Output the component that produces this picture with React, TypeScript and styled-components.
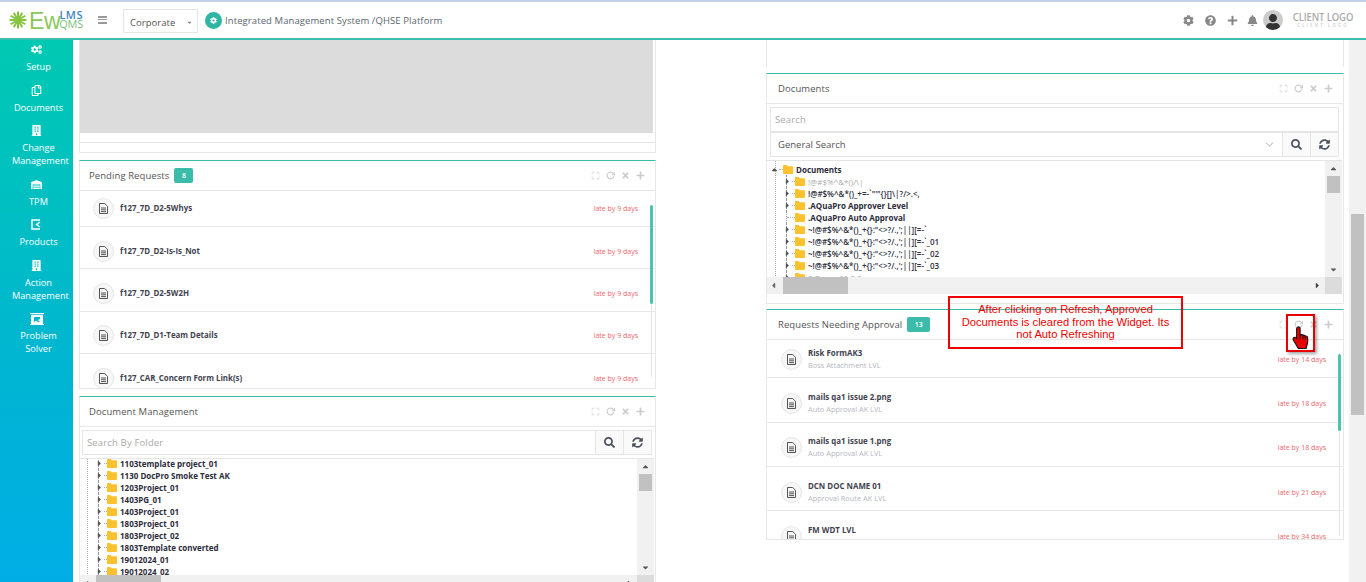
import styled, { createGlobalStyle } from 'styled-components';
import { FaBell, FaBuilding, FaCaretDown, FaCaretLeft, FaCaretRight, FaCaretUp, FaCog, FaCogs, FaPlus, FaQuestionCircle, FaRegCopy, FaSearch, FaSyncAlt, FaTimes, FaUser, FaWarehouse } from 'react-icons/fa';
import { FiChevronDown, FiMaximize, FiRotateCw } from 'react-icons/fi';

const font = `"Open Sans", "Noto Sans", "Liberation Sans", sans-serif`;

const GlobalStyle = createGlobalStyle`
  html, body { margin: 0; height: 100%; overflow: hidden; background: #fff; }
  body { font-family: ${font}; color: #555; }
  * { box-sizing: border-box; }
`;

const Page = styled.div`
  position: relative;
  width: 1366px;
  height: 582px;
  overflow: hidden;
  display: flex;
  flex-direction: column;
`;

const Header = styled.header`
  height: 40px;
  flex: none;
  display: flex;
  align-items: center;
  background: #fff;
  border-top: 2px solid #c3d1e8;
  border-bottom: 2px solid #3bbba9;
  padding: 2px 0 0 9px;
`;

const Logo = styled.div`
  width: 77px;
  height: 28px;
  margin-top: -2px;
  display: flex;
  align-items: center;
  flex: none;
`;

const LogoWord = styled.span`
  font: 400 23px/28px "Liberation Sans", sans-serif;
  color: #8cc75a;
  margin-left: 2px;
  letter-spacing: -0.4px;
  padding-top: 1px;
`;

const LogoStack = styled.div`
  display: flex;
  flex-direction: column;
  align-items: flex-end;
  font: 400 11px/9.5px ${font};
  margin: -2px 0 0 -1px;
`;

const LogoLms = styled.span`
  color: #3f86c2;
  letter-spacing: 0.5px;
  font-weight: 600;
`;

const LogoQms = styled.span`
  color: #7cbf7a;
  letter-spacing: -0.2px;
`;

const Burger = styled.div`
  width: 9px;
  height: 8px;
  margin: -2px 0 0 12px;
  flex: none;
  border-top: 2px solid #999;
  border-bottom: 2px solid #999;
  &::after {
    content: '';
    display: block;
    height: 1px;
    margin-top: 0.5px;
    background: #999;
  }
`;

const Selector = styled.div`
  width: 75px;
  height: 24px;
  margin-left: 16px;
  flex: none;
  border: 1px solid #e5e5e5;
  display: flex;
  align-items: center;
  justify-content: space-between;
  padding: 2px 4px 0 6px;
  font-size: 9.5px;
  letter-spacing: 0.05px;
  color: #555;
  svg { font-size: 7px; color: #888; }
`;

const PlatformMark = styled.span`
  width: 17px;
  height: 17px;
  margin: -1px 3px 0 7px;
  border-radius: 50%;
  background: #2fb5a4;
  color: #fff;
  display: flex;
  align-items: center;
  justify-content: center;
  flex: none;
  font-size: 7px;
`;

const PlatformTitle = styled.span`
  font-size: 9.5px;
  letter-spacing: 0.09px;
  color: #5b6770;
  margin-top: -2px;
`;

const HeaderTools = styled.div`
  margin-left: auto;
  display: flex;
  align-items: center;
  color: #888;
  padding-right: 13px;
  margin-top: -2px;
`;

const HeaderIcon = styled.span<{ $wide?: number }>`
  width: ${({ $wide }) => $wide ?? 22}px;
  display: flex;
  justify-content: center;
  font-size: 11px;
`;

const Avatar = styled.span`
  width: 20px;
  height: 20px;
  margin: 0 10px 0 2px;
  border-radius: 50%;
  overflow: hidden;
  background: #ccc;
  color: #333;
  display: flex;
  align-items: flex-end;
  justify-content: center;
  font-size: 16px;
`;

const ClientLogo = styled.div`
  display: flex;
  flex-direction: column;
  align-items: center;
  width: 60px;
  color: #aaa;
  font-size: 9.5px;
  line-height: 10px;
  font-weight: 600;
  white-space: nowrap;
  letter-spacing: -0.1px;
  transform: scaleY(1.2);
`;

const ClientSub = styled.span`
  font-size: 4px;
  line-height: 4px;
  letter-spacing: 2.3px;
  color: #ccc;
`;

const Body = styled.div`
  flex: 1;
  min-height: 0;
  display: flex;
`;

const Sidebar = styled.nav`
  width: 73px;
  flex: none;
  padding-top: 1px;
  background: linear-gradient(180deg, #00c9b2 0%, #00b5d2 60%, #00aee6 100%);
  color: #fff;
`;

const NavItem = styled.div`
  padding-bottom: 8.5px;
`;

const NavIcon = styled.div`
  height: 17px;
  display: flex;
  align-items: center;
  justify-content: center;
  font-size: 11px;
`;

const NavLabel = styled.div`
  width: 53px;
  margin: 2px 0 0 12px;
  text-align: center;
  font-size: 9.2px;
  line-height: 13px;
`;

const Columns = styled.div`
  flex: 1;
  min-width: 0;
  display: flex;
  padding-left: 6px;
  gap: 110px;
`;

const Column = styled.div<{ $width: number }>`
  width: ${({ $width }) => $width}px;
  flex: none;
  display: flex;
  flex-direction: column;
`;

const Widget = styled.section<{ $height: number; $gap?: number; $tail?: number }>`
  height: ${({ $height }) => $height}px;
  margin-bottom: ${({ $gap }) => $gap ?? 0}px;
  padding-bottom: ${({ $tail }) => $tail ?? 0}px;
  flex: none;
  position: relative;
  display: flex;
  flex-direction: column;
  overflow: hidden;
  background: #fff;
  border: 1px solid #e7e7e7;
  border-top: 1.5px solid #3bbba9;
`;

const ChartStub = styled.div`
  height: 113px;
  flex: none;
  margin-bottom: 7px;
  border: 1px solid #e7e7e7;
  border-top: none;
`;

const ChartInner = styled.div`
  height: 103px;
  padding-right: 2px;
  border-bottom: 1px solid #e7e7e7;
`;

const ChartFill = styled.div`
  height: 93px;
  background: #dcdcdc;
`;

const TopStub = styled.div`
  height: 27px;
  flex: none;
  margin-bottom: 6px;
  border: 1px solid #e7e7e7;
  border-top: none;
  border-bottom: none;
`;

const WidgetHeader = styled.div<{ $inset: number }>`
  height: 30px;
  flex: none;
  display: flex;
  align-items: center;
  padding: 0 10px 0 ${({ $inset }) => $inset}px;
  border-bottom: 1px solid #e7e7e7;
`;

const WidgetTitle = styled.h3`
  margin: 0;
  font-size: 9.5px;
  font-weight: 400;
  letter-spacing: 0.08px;
  color: #555;
`;

const Count = styled.span`
  width: ${({ children }) => (String(children).length > 1 ? 23 : 19)}px;
  height: 15px;
  margin-left: 5px;
  border-radius: 2px;
  background: #3bbba9;
  color: #fff;
  font-size: 7px;
  font-weight: 600;
  display: flex;
  align-items: center;
  justify-content: center;
`;

const WidgetTools = styled.div`
  margin-left: auto;
  display: flex;
  align-items: center;
  gap: 6px;
  color: #ccc;
  font-size: 9px;
`;

const RowList = styled.div<{ $scroll: number }>`
  flex: 1;
  min-height: 0;
  overflow: hidden;
  & > :first-child {
    margin-top: ${({ $scroll }) => -$scroll}px;
  }
`;

const Row = styled.div<{ $height: number; $left: number }>`
  height: ${({ $height }) => $height}px;
  display: flex;
  align-items: center;
  padding: 7px 17px 0 ${({ $left }) => $left}px;
  border-bottom: 1px solid #e7e7e7;
`;

const RowIcon = styled.span`
  width: 21px;
  height: 21px;
  flex: none;
  margin-right: 6px;
  border-radius: 50%;
  border: 1px solid #e6e6e6;
  background: #f7f7f7;
  color: #555;
  display: flex;
  align-items: center;
  justify-content: center;
`;

const RowText = styled.div`
  flex: 1;
  min-width: 0;
`;

const RowName = styled.div`
  font-size: 7.9px;
  line-height: 11px;
  font-weight: 700;
  color: #3f4350;
`;

const RowSub = styled.div`
  font-size: 7.4px;
  line-height: 12px;
  color: #b5b8bf;
`;

const Late = styled.span`
  font-size: 7px;
  color: #e8686e;
`;

const ListThumb = styled.i<{ $top: number; $height: number; $track: number }>`
  position: absolute;
  top: ${({ $top }) => $top}px;
  right: 2px;
  width: 3px;
  height: ${({ $height }) => $height}px;
  border-radius: 2px;
  background: #4bc4ac;
  &::after {
    content: '';
    position: absolute;
    top: 100%;
    left: 1px;
    width: 1px;
    height: ${({ $track }) => $track}px;
    background: #e2e2e2;
  }
`;

const SearchRow = styled.div<{ $pad: string }>`
  height: 25px;
  flex: none;
  margin: ${({ $pad }) => $pad};
  display: flex;
  border: 1px solid #e5e5e5;
`;

const SearchField = styled.div<{ $ink?: string }>`
  flex: 1;
  padding: 0 5px 1px ${({ $ink }) => ($ink ? 7 : 4)}px;
  display: flex;
  align-items: center;
  justify-content: space-between;
  font-size: 9.5px;
  letter-spacing: ${({ $ink }) => ($ink ? 0 : 0.15)}px;
  color: ${({ $ink }) => $ink ?? '#aaa'};
  svg { color: #c4c8cc; font-size: 13px; margin-right: 1px; }
`;

const SearchButton = styled.span`
  width: 28px;
  flex: none;
  display: flex;
  align-items: center;
  justify-content: center;
  background: #fafafa;
  border-left: 1px solid #e5e5e5;
  color: #4a5060;
  font-size: 11px;
`;

const TreePane = styled.div`
  flex: 1;
  min-height: 0;
  display: grid;
  grid-template-columns: 1fr 17px;
  grid-template-rows: 1fr 17px;
  border-top: 1px solid #e5e5e5;
  margin: 3px 1px 0 0;
`;

const TreeBody = styled.div<{ $left: number; $top: number; $guide: number }>`
  overflow: hidden;
  min-height: 0;
  padding-left: ${({ $left }) => $left}px;
  background: linear-gradient(#aaa 50%, transparent 0) ${({ $guide }) => $guide}px 0 / 1px 2px repeat-y;
  & > :first-child {
    margin-top: ${({ $top }) => $top}px;
  }
`;

const TreeRow = styled.div<{ $level: number; $tone: 'bold' | 'semi' | 'mute' }>`
  height: 12px;
  display: flex;
  align-items: center;
  margin-left: ${({ $level }) => $level * 12}px;
  font-size: 8px;
  white-space: nowrap;
  font-weight: ${({ $tone }) => ($tone === 'bold' ? 700 : $tone === 'semi' ? 600 : 400)};
  color: ${({ $tone }) => ($tone === 'mute' ? '#aaa' : '#2c2c3a')};
`;

const Branch = styled.span<{ $lines: boolean }>`
  width: 9px;
  height: 12px;
  flex: none;
  display: flex;
  align-items: center;
  color: #555;
  font-size: 9px;
  border-left: ${({ $lines }) => ($lines ? '1px dotted #999' : 'none')};
  svg { margin-left: -4px; flex: none; }
  &::after {
    content: '';
    flex: 1;
    border-top: 1px dotted #aaa;
  }
`;

const FolderIcon = styled.svg`
  width: 10px;
  height: 9px;
  flex: none;
  margin-right: 3px;
`;

const VBar = styled.div`
  grid-row: 1;
  grid-column: 2;
  min-height: 0;
  overflow: hidden;
  background: #f1f1f1;
  display: flex;
  flex-direction: column;
  align-items: center;
  color: #555;
  font-size: 9px;
  padding-top: 3px;
`;

const VThumb = styled.div`
  width: 13px;
  height: 17px;
  flex: none;
  margin-top: 3px;
  background: #c1c1c1;
`;

const VArrowEnd = styled.div`
  margin-top: auto;
  padding-bottom: 3px;
  line-height: 0;
`;

const HBar = styled.div`
  grid-row: 2;
  grid-column: 1;
  background: #f1f1f1;
  display: flex;
  align-items: center;
  padding-left: 2px;
  color: #666;
  font-size: 9px;
`;

const HThumb = styled.div`
  width: 65px;
  height: 17px;
  margin-left: 5px;
  background: #c1c1c1;
`;

const HArrowEnd = styled.span`
  margin-left: auto;
  padding-right: 3px;
  line-height: 0;
  color: #444;
`;

const Corner = styled.div`
  grid-row: 2;
  grid-column: 2;
  background: #dcdcdc;
`;

const PageBar = styled.div`
  width: 17px;
  flex: none;
  margin-left: 5px;
  padding: 174px 2px 0;
  background: #f1f1f1;
`;

const PageThumb = styled.div`
  height: 201px;
  background: #c1c1c1;
`;

const Callout = styled.div`
  position: absolute;
  left: 948px;
  top: 296px;
  width: 235px;
  height: 53px;
  padding: 5px 8px 0;
  border: 2px solid #f00000;
  color: #f00000;
  text-align: center;
  font: 400 11.2px/12.5px "Liberation Sans", Arial, sans-serif;
`;

const CursorBox = styled.div`
  position: absolute;
  left: 1286px;
  top: 314px;
  width: 29px;
  height: 38px;
  border: 2px solid #e80000;
  box-shadow: 2px 2px 3px rgba(0, 0, 0, 0.35);
  display: flex;
  justify-content: center;
  padding-top: 10px;
`;

type RowData = { name: string; sub?: string; late: string };

const pending: RowData[] = [
  { name: 'f127_7D_D2-5Whys', late: 'late by 9 days' },
  { name: 'f127_7D_D2-Is-Is_Not', late: 'late by 9 days' },
  { name: 'f127_7D_D2-5W2H', late: 'late by 9 days' },
  { name: 'f127_7D_D1-Team Details', late: 'late by 9 days' },
  { name: 'f127_CAR_Concern Form Link(s)', late: 'late by 9 days' },
];

const approvals: RowData[] = [
  { name: 'Risk FormAK3', sub: 'Boss Attachment LVL', late: 'late by 14 days' },
  { name: 'mails qa1 issue 2.png', sub: 'Auto Approval AK LVL', late: 'late by 18 days' },
  { name: 'mails qa1 issue 1.png', sub: 'Auto Approval AK LVL', late: 'late by 18 days' },
  { name: 'DCN DOC NAME 01', sub: 'Approval Route AK LVL', late: 'late by 21 days' },
  { name: 'FM WDT LVL', sub: '\u00a0', late: 'late by 34 days' },
];

type Folder = { label: string; tone?: 'bold' | 'semi' | 'mute'; leaf?: boolean };

const managedFolders: Folder[] = [
  '1103template project_01',
  '1130 DocPro Smoke Test AK',
  '1203Project_01',
  '1403PG_01',
  '1403Project_01',
  '1803Project_01',
  '1803Project_02',
  '1803Template converted',
  '19012024_01',
  '19012024_02',
].map((label) => ({ label, tone: 'bold' as const }));

const symbols = '~!@#$%^&*()_+{}:"<>?/.,\';||][=-`';

const docFolders: Folder[] = [
  { label: '!@#$%^&*()/\\|', tone: 'mute' },
  { label: '!@#$%^&*()_+=-`"\'"{}[]\\|?/>.<,', tone: 'semi' },
  { label: '.AQuaPro Approver Level', tone: 'bold' },
  { label: '.AQuaPro Auto Approval', tone: 'bold', leaf: true },
  { label: symbols, tone: 'semi' },
  { label: `${symbols}_01`, tone: 'semi' },
  { label: `${symbols}_02`, tone: 'semi' },
  { label: `${symbols}_03`, tone: 'semi' },
  { label: '0 Demo 11.2.0', tone: 'mute' },
];

function FolderGlyph() {
  return (
    <FolderIcon viewBox="0 0 10 9">
      <path d="M0 1.2C0 .5.4 0 1 0h2.6l1 1.3H9c.6 0 1 .4 1 1V8c0 .6-.4 1-1 1H1c-.6 0-1-.4-1-1z" fill="#fdc22d" />
    </FolderIcon>
  );
}

function Tree({ rows, root, left, top, guide }: { rows: Folder[]; root?: string; left: number; top: number; guide: number }) {
  return (
    <TreePane>
      <TreeBody $left={left} $top={top} $guide={guide}>
        {root && (
          <TreeRow $level={0} $tone="bold">
            <Branch $lines={false}><FaCaretUp /></Branch>
            <FolderGlyph />
            {root}
          </TreeRow>
        )}
        {rows.map((row) => (
          <TreeRow key={row.label} $level={1} $tone={row.tone ?? 'bold'}>
            <Branch $lines>{!row.leaf && <FaCaretRight />}</Branch>
            <FolderGlyph />
            {row.label}
          </TreeRow>
        ))}
      </TreeBody>
      <VBar>
        <FaCaretUp />
        <VThumb />
        <VArrowEnd><FaCaretDown /></VArrowEnd>
      </VBar>
      <HBar>
        <FaCaretLeft />
        <HThumb />
        <HArrowEnd><FaCaretRight /></HArrowEnd>
      </HBar>
      <Corner />
    </TreePane>
  );
}

function DocGlyph() {
  return (
    <svg width="9" height="11" viewBox="0 0 9 11" fill="none" stroke="#555" strokeWidth="1">
      <path d="M.5.5h5.2l2.8 2.8v7.2h-8z" />
      <path d="M2 5h5M2 6.8h5M2 8.6h5" />
    </svg>
  );
}

function Rows({ rows, height, scroll, left }: { rows: RowData[]; height: number; scroll: number; left: number }) {
  return (
    <RowList $scroll={scroll}>
      {rows.map((row) => (
        <Row key={row.name} $height={height} $left={left}>
          <RowIcon><DocGlyph /></RowIcon>
          <RowText>
            <RowName>{row.name}</RowName>
            {row.sub && <RowSub>{row.sub}</RowSub>}
          </RowText>
          <Late>{row.late}</Late>
        </Row>
      ))}
    </RowList>
  );
}

function PanelHead({ title, count, inset }: { title: string; count?: number; inset: number }) {
  return (
    <WidgetHeader $inset={inset}>
      <WidgetTitle>{title}</WidgetTitle>
      {count !== undefined && <Count>{count}</Count>}
      <WidgetTools>
        <FiMaximize />
        <FiRotateCw strokeWidth={3} />
        <FaTimes />
        <FaPlus />
      </WidgetTools>
    </WidgetHeader>
  );
}

function SearchButtons() {
  return (
    <>
      <SearchButton><FaSearch /></SearchButton>
      <SearchButton><FaSyncAlt /></SearchButton>
    </>
  );
}

function ProductGlyph() {
  return (
    <svg width="11" height="11" viewBox="0 0 11 11" fill="none" stroke="#fff" strokeWidth="1.5">
      <path d="M9 1H1v9h8M9 3L5.5 5.5 9 8" />
    </svg>
  );
}

function BoardGlyph() {
  return (
    <svg width="14" height="12" viewBox="0 0 14 12" fill="#fff">
      <path d="M0 0h14v1.2H0zM1 2h12v9H1zM0 11h14v1H0z" />
      <path d="M4 4h6v2l-2 1 2 2H8L6 7.5 4 9z" fill="#00b7cf" />
    </svg>
  );
}

const navItems = [
  { label: 'Setup', icon: <FaCogs /> },
  { label: 'Documents', icon: <FaRegCopy /> },
  { label: 'Change Management', icon: <FaBuilding /> },
  { label: 'TPM', icon: <FaWarehouse /> },
  { label: 'Products', icon: <ProductGlyph /> },
  { label: 'Action Management', icon: <FaBuilding /> },
  { label: 'Problem Solver', icon: <BoardGlyph /> },
];

function Sunburst() {
  const spokes = Array.from({ length: 12 }, (_, i) => i * 30);
  return (
    <svg width="18" height="18" viewBox="0 0 18 18" style={{ flex: 'none' }}>
      <circle cx="9" cy="9" r="3" fill="#86c440" />
      {spokes.map((deg) => (
        <line key={deg} x1="9" y1="9" x2="9" y2="0.5" stroke="#86c440" strokeWidth="2" transform={`rotate(${deg} 9 9)`} />
      ))}
    </svg>
  );
}

function HandCursor() {
  return (
    <svg width="18" height="24" viewBox="0 0 20 27">
      <path
        d="M6 1.5c1.2-1 3-.4 3 1.3V10l1-.3c.9-.3 1.9 0 2.2.8.9-.5 2.2-.2 2.6.8 1-.4 2.4.2 2.6 1.4.4 2.4.3 5-.3 7.4l-1.3 5.2H7L1.5 16c-.9-1.3-.4-2.6.6-3.1 1-.5 2.1-.1 3 1V2.8c0-.5.4-1 .9-1.3z"
        fill="#e60000"
        stroke="#111"
        strokeWidth="1.2"
      />
      <path d="M9 10v5M12.2 10.5V15M14.8 11.3V15" stroke="#111" strokeWidth="1" fill="none" />
    </svg>
  );
}

export default function App() {
  return (
    <Page>
      <GlobalStyle />
      <Header>
        <Logo>
          <Sunburst />
          <LogoWord>Ew</LogoWord>
          <LogoStack>
            <LogoLms>LMS</LogoLms>
            <LogoQms>QMS</LogoQms>
          </LogoStack>
        </Logo>
        <Burger />
        <Selector>Corporate<FaCaretDown /></Selector>
        <PlatformMark><FaCog /></PlatformMark>
        <PlatformTitle>Integrated Management System /QHSE Platform</PlatformTitle>
        <HeaderTools>
          <HeaderIcon><FaCog /></HeaderIcon>
          <HeaderIcon><FaQuestionCircle /></HeaderIcon>
          <HeaderIcon><FaPlus /></HeaderIcon>
          <HeaderIcon $wide={18}><FaBell /></HeaderIcon>
          <Avatar><FaUser /></Avatar>
          <ClientLogo>CLIENT LOGO<ClientSub>CLIENT LOGO</ClientSub></ClientLogo>
        </HeaderTools>
      </Header>
      <Body>
        <Sidebar>
          {navItems.map((item) => (
            <NavItem key={item.label}>
              <NavIcon>{item.icon}</NavIcon>
              <NavLabel>{item.label}</NavLabel>
            </NavItem>
          ))}
        </Sidebar>
        <Columns>
          <Column $width={577}>
            <ChartStub><ChartInner><ChartFill /></ChartInner></ChartStub>
            <Widget $height={229} $gap={7}>
              <PanelHead title="Pending Requests" count={8} inset={9} />
              <Rows rows={pending} height={42.4} scroll={6.5} left={13} />
              <ListThumb $top={44} $height={99} $track={73} />
            </Widget>
            <Widget $height={200} $tail={3}>
              <PanelHead title="Document Management" inset={9} />
              <SearchRow $pad="3px 3px 0 2px">
                <SearchField>Search By Folder</SearchField>
                <SearchButtons />
              </SearchRow>
              <Tree rows={managedFolders} left={6} top={-2} guide={7} />
            </Widget>
          </Column>
          <Column $width={578}>
            <TopStub />
            <Widget $height={231} $gap={5} $tail={9}>
              <PanelHead title="Documents" inset={11} />
              <SearchRow $pad="3px 4px 0 3px">
                <SearchField>Search</SearchField>
              </SearchRow>
              <SearchRow $pad="0 4px 0 3px">
                <SearchField $ink="#555">General Search<FiChevronDown /></SearchField>
                <SearchButtons />
              </SearchRow>
              <Tree rows={docFolders} root="Documents" left={7} top={2} guide={8} />
            </Widget>
            <Widget $height={231}>
              <PanelHead title="Requests Needing Approval" count={13} inset={11} />
              <Rows rows={approvals} height={44.3} scroll={6} left={14} />
              <ListThumb $top={44} $height={77} $track={105} />
            </Widget>
          </Column>
        </Columns>
        <PageBar><PageThumb /></PageBar>
      </Body>
      <Callout>After clicking on Refresh, Approved Documents is cleared from the Widget. Its not Auto Refreshing</Callout>
      <CursorBox><HandCursor /></CursorBox>
    </Page>
  );
}
